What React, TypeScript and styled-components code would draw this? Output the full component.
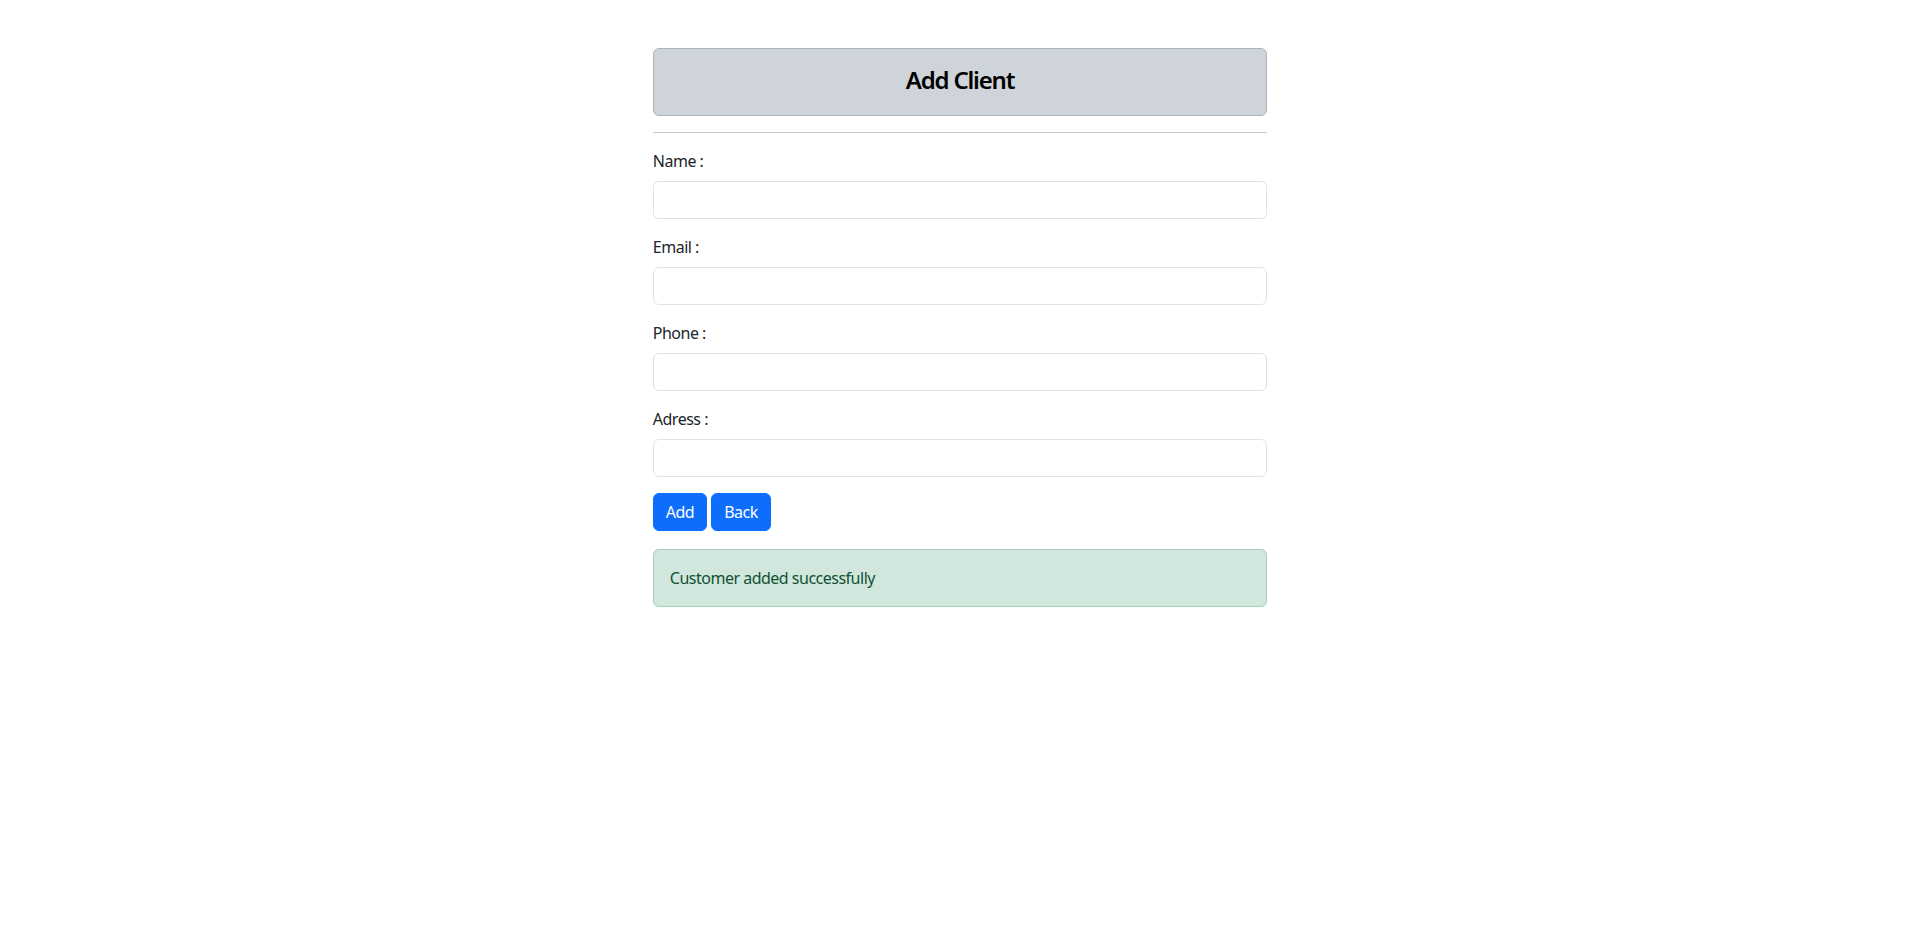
import React, { useState } from "react";
import styled, { createGlobalStyle } from "styled-components";

const GlobalStyle = createGlobalStyle`
  body {
    margin: 0;
    background: #fff;
    color: #212529;
    font-family: "Noto Sans", "Open Sans", sans-serif;
    font-size: 16px;
    line-height: 1.5;
    letter-spacing: -0.5px;
  }
  * {
    box-sizing: border-box;
  }
`;

const Container = styled.div`
  width: 32%;
  margin: 48px auto 0;
`;

const Header = styled.div`
  background: #ced4da;
  border: 1px solid #adb5bd;
  border-radius: 6px;
  padding: 17px 16px 20px;
  text-align: center;
`;

const Title = styled.h4`
  margin: 0;
  font-size: 24px;
  font-weight: 600;
  line-height: 1.2;
  letter-spacing: -1.2px;
  color: #000;
`;

const Divider = styled.hr`
  margin: 16px 0;
  border: 0;
  border-top: 1px solid #212529;
  opacity: 0.25;
`;

const Field = styled.div`
  margin-bottom: 16px;
`;

const Label = styled.label`
  display: block;
  margin-bottom: 8px;
`;

const Input = styled.input`
  display: block;
  width: 100%;
  height: 38px;
  padding: 6px 12px;
  font: inherit;
  color: #212529;
  border: 1px solid #dee2e6;
  border-radius: 6px;
  outline: none;
`;

const Actions = styled.div`
  display: flex;
  gap: 4px;
`;

const Button = styled.button`
  height: 38px;
  padding: 6px 12px;
  font: inherit;
  letter-spacing: inherit;
  color: #fff;
  background: #0d6efd;
  border: 1px solid #0d6efd;
  border-radius: 6px;
  cursor: pointer;
`;

const Alert = styled.div`
  margin-top: 18px;
  padding: 16px;
  color: #0f5132;
  background: #d1e7dd;
  border: 1px solid #a3cfbb;
  border-radius: 6px;
`;

const fields = [
  { key: "name", label: "Name :" },
  { key: "email", label: "Email :" },
  { key: "phone", label: "Phone :" },
  { key: "adress", label: "Adress :" },
];

const App: React.FC = () => {
  const [values, setValues] = useState<Record<string, string>>({});

  return (
    <>
      <GlobalStyle />
      <Container>
        <Header>
          <Title>Add Client</Title>
        </Header>
        <Divider />
        {fields.map((f) => (
          <Field key={f.key}>
            <Label htmlFor={f.key}>{f.label}</Label>
            <Input
              id={f.key}
              value={values[f.key] || ""}
              onChange={(e) => setValues({ ...values, [f.key]: e.target.value })}
            />
          </Field>
        ))}
        <Actions>
          <Button>Add</Button>
          <Button>Back</Button>
        </Actions>
        <Alert>Customer added successfully</Alert>
      </Container>
    </>
  );
};

export default App;
